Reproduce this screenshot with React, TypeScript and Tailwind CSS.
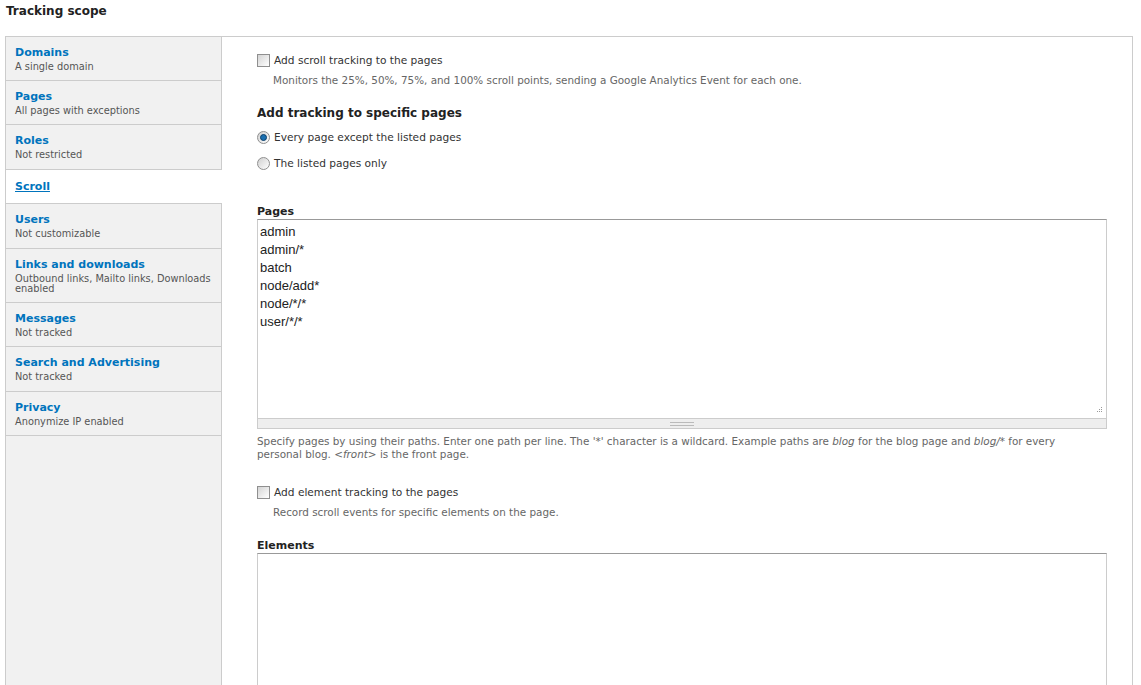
import React from "react";

const tabs = [
  { t: "Domains", s: "A single domain", h: "h-[44px]" },
  { t: "Pages", s: "All pages with exceptions", h: "h-[44px]" },
  { t: "Roles", s: "Not restricted", h: "h-[45px]" },
  { t: "Scroll", s: "", h: "h-[34px]", sel: true },
  { t: "Users", s: "Not customizable", h: "h-[45px]" },
  { t: "Links and downloads", s: "Outbound links, Mailto links, Downloads enabled", h: "h-[54px]" },
  { t: "Messages", s: "Not tracked", h: "h-[44px]" },
  { t: "Search and Advertising", s: "Not tracked", h: "h-[45px]" },
  { t: "Privacy", s: "Anonymize IP enabled", h: "h-[44px]" },
];

function Checkbox() {
  return (
    <span className="inline-block w-[13px] h-[13px] border border-[#8f8f8f] bg-gradient-to-br from-[#d4d4d4] to-[#ffffff] shrink-0" />
  );
}

function Radio({ on }: { on?: boolean }) {
  return (
    <span className="inline-flex items-center justify-center w-[13px] h-[13px] rounded-full border border-[#8f8f8f] bg-gradient-to-br from-[#d0d0d0] to-[#ffffff] shrink-0">
      {on && <span className="w-[7px] h-[7px] rounded-full bg-[#1a6fb0] border border-[#0b3f6b]" />}
    </span>
  );
}

function Textarea({ lines, h, grip }: { lines: string[]; h: string; grip?: boolean }) {
  return (
    <div className="w-[850px]">
      <div className={`relative ${h} border border-[#ccc] border-t-[#999] bg-white px-[2px] pt-[3px] font-['Liberation_Sans',Arial,sans-serif] text-[13px] leading-[18px] text-[#222]`}>
        {lines.map((l) => (
          <div key={l}>{l}</div>
        ))}
        {grip && (
          <svg className="absolute right-[3px] bottom-[3px]" width="8" height="8" viewBox="0 0 8 8">
            <rect x="6" y="0" width="1" height="1" fill="#999" />
            <rect x="4" y="2" width="1" height="1" fill="#999" />
            <rect x="6" y="2" width="1" height="1" fill="#999" />
            <rect x="2" y="4" width="1" height="1" fill="#999" />
            <rect x="4" y="4" width="1" height="1" fill="#999" />
            <rect x="6" y="4" width="1" height="1" fill="#999" />
          </svg>
        )}
      </div>
      {grip && (
        <div className="h-[10px] bg-[#eee] border border-t-0 border-[#ccc] flex items-center justify-center">
          <div className="w-[24px] h-[4px] border-t border-b border-[#bbb]" />
        </div>
      )}
    </div>
  );
}

export default function App() {
  return (
    <div className="bg-white w-[1141px] h-[685px] overflow-hidden font-['DejaVu_Sans',Verdana,sans-serif] text-[#333]">
      <div className="pl-[6px] pt-[4px] h-[36px] text-[12px] font-bold leading-[14px] text-[#222]">Tracking scope</div>
      <div className="ml-[5px] w-[1128px] h-[700px] border border-[#ccc] flex">
        <div className="w-[216px] shrink-0 bg-[#f1f1f1] border-r border-[#ccc]">
          {tabs.map((tab) =>
            tab.sel ? (
              <div key={tab.t} className={`${tab.h} bg-white border-b border-[#ccc] -mr-[1px] pl-[9px] pt-[10px]`}>
                <div className="text-[11px] font-bold text-[#0074bd] underline leading-[14px]">{tab.t}</div>
              </div>
            ) : (
              <div key={tab.t} className={`${tab.h} border-b border-[#ccc] pl-[9px] pr-[4px] pt-[9px]`}>
                <div className="text-[11px] font-bold text-[#0074bd] leading-[14px]">{tab.t}</div>
                <div className="text-[9.8px] text-[#555] leading-[10px] mt-[2px]">{tab.s}</div>
              </div>
            )
          )}
        </div>
        <div className="flex-1 pl-[35px] pt-[17px] text-[10.6px]">
          <div className="flex items-center gap-[4px] h-[13px]">
            <Checkbox />
            <span className="text-[#333] leading-[13px]">Add scroll tracking to the pages</span>
          </div>
          <div className="ml-[16px] mt-[7px] text-[10.4px] text-[#666] leading-[13px]">
            Monitors the 25%, 50%, 75%, and 100% scroll points, sending a Google Analytics Event for each one.
          </div>
          <div className="mt-[19px] text-[12px] font-bold text-[#222] leading-[14px]">Add tracking to specific pages</div>
          <div className="mt-[11px] flex items-center gap-[4px] h-[13px]">
            <Radio on />
            <span className="leading-[13px]">Every page except the listed pages</span>
          </div>
          <div className="mt-[13px] flex items-center gap-[4px] h-[13px]">
            <Radio />
            <span className="leading-[13px]">The listed pages only</span>
          </div>
          <div className="mt-[35px] text-[11px] font-bold text-[#222] leading-[14px]">Pages</div>
          <div>
            <Textarea lines={["admin", "admin/*", "batch", "node/add*", "node/*/*", "user/*/*"]} h="h-[200px]" grip />
          </div>
          <div className="mt-[6px] w-[820px] text-[10.4px] text-[#666] leading-[13px]">
            Specify pages by using their paths. Enter one path per line. The '*' character is a wildcard. Example paths are <em>blog</em> for the blog page and <em>blog/*</em> for every personal blog. <em>&lt;front&gt;</em> is the front page.
          </div>
          <div className="mt-[25px] flex items-center gap-[4px] h-[13px]">
            <Checkbox />
            <span className="leading-[13px]">Add element tracking to the pages</span>
          </div>
          <div className="ml-[16px] mt-[7px] text-[10.4px] text-[#666] leading-[13px]">
            Record scroll events for specific elements on the page.
          </div>
          <div className="mt-[20px] text-[11px] font-bold text-[#222] leading-[14px]">Elements</div>
          <div>
            <Textarea lines={[]} h="h-[200px]" />
          </div>
        </div>
      </div>
    </div>
  );
}
